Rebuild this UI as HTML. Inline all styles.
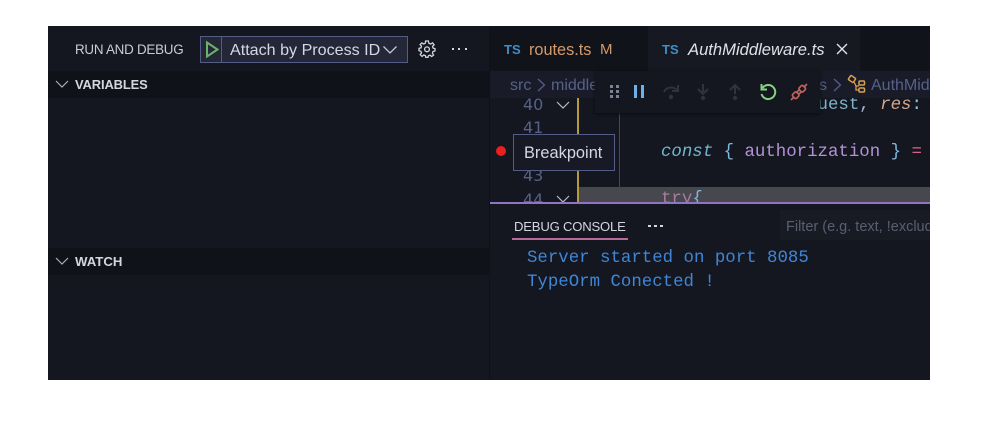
<!DOCTYPE html>
<html><head><meta charset="utf-8">
<style>
html,body{margin:0;padding:0;background:#fff;width:1000px;height:425px;overflow:hidden}
#r{position:absolute;left:0;top:0;width:1000px;height:425px;overflow:hidden;background:#fff;font-family:"Liberation Sans",sans-serif}
.a{position:absolute}
.t{position:absolute;white-space:nowrap;line-height:20px}
.m{font-family:"Liberation Mono",monospace;font-size:17.4px}
svg{position:absolute;overflow:visible}
</style></head><body><div id="r">
<div class="a" style="left:48px;top:26px;width:882px;height:354px;background:#141620;overflow:hidden"></div>
<div class="a" style="left:48px;top:71px;width:441px;height:27px;background:#10121a"></div>
<div class="a" style="left:48px;top:248px;width:441px;height:27px;background:#10121a"></div>
<div class="a" style="left:489px;top:26px;width:1px;height:354px;background:#0f1117"></div>
<div class="t" style="left:75px;top:40px;font-size:13.4px;color:#c9ccd6;letter-spacing:-.25px">RUN AND DEBUG</div>
<div class="a" style="left:200px;top:36px;width:206px;height:25px;border:1px solid #525c85;background:#232738"></div>
<div class="a" style="left:221px;top:37px;width:1px;height:25px;background:#525c85"></div>
<svg style="left:200px;top:37px" width="22" height="25"><path d="M7 5.5 L17.5 12.5 L7 19.5 Z" fill="none" stroke="#6cb36a" stroke-width="2"/></svg>
<div class="t" style="left:230px;top:40px;font-size:16.1px;color:#d5d8e2">Attach by Process ID</div>
<svg style="left:382px;top:45px" width="16" height="10"><path d="M1.5 1.5 L8 8 L14.5 1.5" fill="none" stroke="#c5c8d4" stroke-width="1.3"/></svg>
<svg style="left:418px;top:40px" width="18" height="18" viewBox="0 0 18 18"><path d="M7.6 1 H10.4 L10.9 3.3 L12.6 4 L14.6 2.8 L16.1 4.8 L14.5 6.4 L15 8 L17 8.7 V10.9 L15 11.5 L14.4 13.2 L15.6 15 L13.7 16.5 L12 15.1 L10.5 15.7 L10 17.3 H7.8 L7.4 15.6 L5.8 15 L4 16.4 L2.2 14.6 L3.5 12.9 L2.9 11.3 L1 10.7 V8.4 L3 7.8 L3.5 6.2 L2.1 4.5 L3.9 2.8 L5.6 4 L7.2 3.3 Z" fill="none" stroke="#d3d6df" stroke-width="1.3"/><circle cx="9" cy="9.3" r="2.4" fill="none" stroke="#d3d6df" stroke-width="1.3"/></svg>
<div class="a" style="left:452px;top:48px;width:2px;height:2px;background:#d3d6df;box-shadow:6px 0 #d3d6df,13px 0 #d3d6df"></div>
<svg style="left:55px;top:80px" width="14" height="9"><path d="M1 1 L7 7 L13 1" fill="none" stroke="#a9adba" stroke-width="1.2"/></svg>
<div class="t" style="left:75px;top:75px;font-size:12.9px;font-weight:bold;color:#d4d7e0;letter-spacing:-.1px">VARIABLES</div>
<svg style="left:55px;top:257px" width="14" height="9"><path d="M1 1 L7 7 L13 1" fill="none" stroke="#a9adba" stroke-width="1.2"/></svg>
<div class="t" style="left:75px;top:252px;font-size:13.2px;font-weight:bold;color:#d4d7e0">WATCH</div>

<!-- tabs -->
<div class="a" style="left:490px;top:26px;width:440px;height:45px;background:#11131a"></div>
<div class="a" style="left:648px;top:26px;width:212px;height:45px;background:#161822"></div>
<div class="t" style="left:504px;top:40px;font-size:13px;font-weight:bold;color:#3d8fc9">TS</div>
<div class="t" style="left:529px;top:40px;font-size:16.3px;color:#d69a6a">routes.ts</div>
<div class="t" style="left:600px;top:40px;font-size:15px;color:#d69a6a">M</div>
<div class="t" style="left:662px;top:40px;font-size:13px;font-weight:bold;color:#3d8fc9">TS</div>
<div class="t" style="left:688px;top:40px;font-size:16.6px;font-style:italic;color:#dfe1e8">AuthMiddleware.ts</div>
<svg style="left:836px;top:43px" width="12" height="12"><path d="M1 1 L11 11 M11 1 L1 11" stroke="#e1e3ea" stroke-width="1.4"/></svg>

<!-- breadcrumb -->
<div class="a" style="left:490px;top:71px;width:440px;height:27px;background:#191c28"></div>
<div class="t" style="left:510px;top:76px;font-size:16px;color:#56618a">src</div>
<svg style="left:537px;top:78px" width="9" height="14"><path d="M1 1 L7.5 7 L1 13" fill="none" stroke="#56618a" stroke-width="1.2"/></svg>
<div class="t" style="left:551px;top:76px;font-size:16px;color:#56618a">middleware</div>
<div class="t" style="left:819px;top:76px;font-size:16px;color:#56618a">s</div>
<svg style="left:833px;top:78px" width="9" height="14"><path d="M1 1 L7.5 7 L1 13" fill="none" stroke="#56618a" stroke-width="1.2"/></svg>
<svg style="left:848px;top:75px" width="18" height="18" viewBox="0 0 18 18"><rect x="1" y="1.5" width="6" height="5" rx="1" transform="rotate(35 4 4)" fill="none" stroke="#d9a04f" stroke-width="1.5"/><rect x="11" y="6" width="5.5" height="4" rx="1" fill="none" stroke="#d9a04f" stroke-width="1.5"/><rect x="11" y="13" width="5.5" height="4" rx="1" fill="none" stroke="#d9a04f" stroke-width="1.5"/><path d="M6 7 L8 11 H11 M8 11 V15 H11" fill="none" stroke="#d9a04f" stroke-width="1.3"/></svg>
<div class="t" style="left:871px;top:76px;font-size:16px;color:#56618a">AuthMiddleware</div>

<!-- editor -->
<div class="a" style="left:490px;top:98px;width:440px;height:105px;background:#141620;overflow:hidden">
<div class="t" style="left:33px;top:-3px;color:#56618a;font-family:'DejaVu Sans',sans-serif;font-size:16px">40</div>
<div class="t" style="left:33px;top:20px;color:#56618a;font-family:'DejaVu Sans',sans-serif;font-size:16px">41</div>
<div class="t" style="left:33px;top:68px;color:#56618a;font-family:'DejaVu Sans',sans-serif;font-size:16px">43</div>
<div class="t" style="left:33px;top:92px;color:#56618a;font-family:'DejaVu Sans',sans-serif;font-size:16px">44</div>
<svg style="left:66px;top:3px" width="14" height="8"><path d="M1 1 L7 7 L13 1" fill="none" stroke="#b9bdc9" stroke-width="1.2"/></svg>
<svg style="left:66px;top:97px" width="14" height="8"><path d="M1 1 L7 7 L13 1" fill="none" stroke="#b9bdc9" stroke-width="1.2"/></svg>
<div class="a" style="left:87px;top:0;width:2px;height:105px;background:#b59a3c"></div>
<div class="a" style="left:89px;top:89px;width:351px;height:16px;background:#46484d"></div>
<div class="a" style="left:129px;top:0;width:1px;height:105px;background:#45475a"></div>
<div class="t m" style="left:171px;top:-2px;color:#7fb4c9">&nbsp;&nbsp;&nbsp;&nbsp;&nbsp;&nbsp;&nbsp;&nbsp;&nbsp;&nbsp;&nbsp;&nbsp;&nbsp;&nbsp;&nbsp;uest<span style="color:#9fb6d6">,</span> <i style="color:#d6a58a">res</i><span style="color:#8fc3dc">:</span></div>
<div class="t m" style="left:171px;top:45px;color:#b392d6"><i style="color:#6fb7c9">const</i> <span style="color:#7fb8dc">{</span> authorization <span style="color:#7fb8dc">}</span> <span style="color:#d8628f">=</span></div>
<div class="t m" style="left:171px;top:92px;color:#a87c9f">try<span style="color:#7fb8dc">{</span></div>
</div>
<div class="a" style="left:496px;top:146px;width:10px;height:10px;background:#ea1f1f;border-radius:50%"></div>
<div class="a" style="left:513px;top:134px;width:100px;height:35px;background:#171a25;border:1px solid #525c85"></div>
<div class="t" style="left:524px;top:143px;font-size:16.4px;color:#d5d8e0">Breakpoint</div>

<!-- debug toolbar -->
<div class="a" style="left:595px;top:71px;width:225px;height:42px;background:#151720;box-shadow:0 1px 3px #0b0c10"></div>
<svg style="left:610px;top:85px" width="10" height="14"><g fill="#7c8294"><rect x="0" y="0" width="3" height="3"/><rect x="6" y="0" width="3" height="3"/><rect x="0" y="5" width="3" height="3"/><rect x="6" y="5" width="3" height="3"/><rect x="0" y="10" width="3" height="3"/><rect x="6" y="10" width="3" height="3"/></g></svg>
<div class="a" style="left:634px;top:85px;width:3px;height:13px;background:#6db1ea"></div>
<div class="a" style="left:641px;top:85px;width:3px;height:13px;background:#6db1ea"></div>
<svg style="left:662px;top:83px" width="18" height="18"><path d="M2 9 C4 4 11 3 15 7" fill="none" stroke="#2f3340" stroke-width="2"/><path d="M16 2 V8 H10" fill="none" stroke="#2f3340" stroke-width="2"/><circle cx="9" cy="14" r="2.2" fill="#2f3340"/></svg>
<svg style="left:695px;top:83px" width="16" height="18"><path d="M8 1 V9 M3 6 L8 11 L13 6" fill="none" stroke="#2f3340" stroke-width="2"/><circle cx="8" cy="15" r="2.2" fill="#2f3340"/></svg>
<svg style="left:727px;top:83px" width="16" height="18"><path d="M8 11 V2 M3 7 L8 2 L13 7" fill="none" stroke="#2f3340" stroke-width="2"/><circle cx="8" cy="15" r="2.2" fill="#2f3340"/></svg>
<svg style="left:759px;top:83px" width="18" height="18"><path d="M3.5 5 A7 7 0 1 1 2.5 11" fill="none" stroke="#85d37e" stroke-width="2"/><path d="M2.5 1 V6.5 H8" fill="none" stroke="#85d37e" stroke-width="2"/></svg>
<svg style="left:790px;top:83px" width="18" height="18"><g fill="none" stroke="#c4605c" stroke-width="1.7"><rect x="9.5" y="3" width="5.5" height="5.5" rx="1.5" transform="rotate(45 12.2 5.7)"/><rect x="3" y="9.5" width="5.5" height="5.5" rx="1.5" transform="rotate(45 5.7 12.2)"/><path d="M1 17 L4 14 M14 4 L17 1"/><path d="M7 9 L9 7 M9 11 L11 9"/></g></svg>

<!-- panel -->
<div class="a" style="left:490px;top:202px;width:440px;height:2px;background:#8f74c4"></div>
<div class="a" style="left:490px;top:204px;width:440px;height:176px;background:#141620"></div>
<div class="t" style="left:514px;top:217px;font-size:13.1px;color:#d3d6df;letter-spacing:-.2px">DEBUG CONSOLE</div>
<div class="a" style="left:512px;top:238px;width:116px;height:2px;background:#b76a9c"></div>
<div class="a" style="left:648px;top:225px;width:3px;height:2px;background:#d3d6df;box-shadow:6px 0 #d3d6df,12px 0 #d3d6df"></div>
<div class="a" style="left:780px;top:210px;width:150px;height:30px;background:#181a24"></div>
<div class="t" style="left:786px;top:217px;font-size:14.5px;color:#5a5f70">Filter (e.g. text, !exclude)</div>
<div class="t m" style="left:527px;top:249px;color:#3f86d6">Server started on port 8085</div>
<div class="t m" style="left:527px;top:273px;color:#3f86d6">TypeOrm Conected !</div>
<div class="a" style="left:930px;top:0;width:70px;height:425px;background:#fff"></div>
</div></body></html>
